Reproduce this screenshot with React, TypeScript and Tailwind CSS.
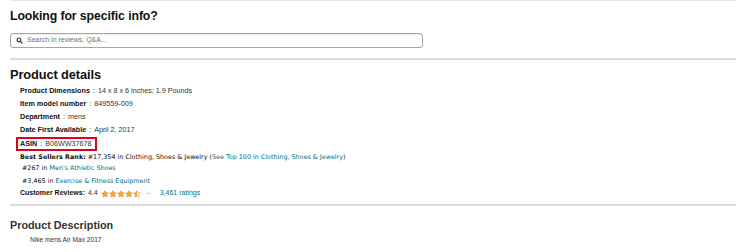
import React from 'react';

const STAR = 'M12 2l2.9 6.6 7.1.6-5.4 4.7 1.6 7-6.2-3.7-6.2 3.7 1.6-7L2 9.2l7.1-.6z';

const Star: React.FC<{ fill: number; id: string }> = ({ fill, id }) => (
  <svg width="8" height="8" viewBox="0 0 24 24" className="shrink-0">
    <defs>
      <linearGradient id={id}>
        <stop offset={`${fill * 100}%`} stopColor="#FFA41C" />
        <stop offset={`${fill * 100}%`} stopColor="#ffffff" />
      </linearGradient>
    </defs>
    <path d={STAR} fill={`url(#${id})`} stroke="#DE7921" strokeWidth="1.6" strokeLinejoin="round" />
  </svg>
);

const details: [string, string][] = [
  ['Product Dimensions', '14 x 8 x 6 inches; 1.9 Pounds'],
  ['Item model number', '849559-009'],
  ['Department', 'mens'],
  ['Date First Available', 'April 2, 2017'],
];

export default function App() {
  return (
    <div className="w-[744px] h-[252px] bg-white overflow-hidden px-[10px] text-[#0F1111]" style={{ fontFamily: '"Liberation Sans", Arial, sans-serif' }}>
      {/* search */}
      <div className="border-t border-[#e7e7e7] pt-[7px] pb-[10px] w-[726px]">
        <h2 className="text-[12.3px] leading-[16px] font-bold tracking-[-0.1px]">Looking for specific info?</h2>
        <div className="mt-[9px] w-[413px] h-[15px] border border-[#a6a6a6] rounded-[3px] flex items-center gap-[4px] pl-[5px] shadow-[inset_0_1px_1px_rgba(0,0,0,0.08)]">
          <svg width="7" height="7" viewBox="0 0 24 24" fill="none" stroke="#333" strokeWidth="4" strokeLinecap="round">
            <circle cx="10" cy="10" r="6.5" />
            <path d="M15 15l6 6" />
          </svg>
          <span className="text-[7px] text-[#6f7373]">Search in reviews, Q&amp;A...</span>
        </div>
      </div>

      {/* details */}
      <div className="border-t-2 border-[#dcdcdc] pt-[6px] pb-[4px] w-[726px]">
        <h2 className="text-[12.8px] leading-[18px] font-bold tracking-[-0.1px]">Product details</h2>
        <div className="pl-[10px] mt-[1px] text-[7.2px]">
          {details.map(([k, v]) => (
            <div key={k} className="h-[13px] flex items-center">
              <span className="font-bold">{k}</span>
              <span className="mx-[3px]">:</span>
              <span className="text-[#333]">{v}</span>
            </div>
          ))}
          <div className="h-[14px] flex items-center -ml-[4px]">
            <div className="border-2 border-[#e3001b] px-[2px] h-[14px] flex items-center w-[81px]">
              <span className="font-bold">ASIN</span>
              <span className="mx-[3px]">:</span>
              <span className="text-[#333]">B06WW37678</span>
            </div>
          </div>
          <div className="text-[6.4px] mt-[1px]" style={{ fontFamily: '"DejaVu Sans", Verdana, sans-serif' }}>
            <div className="leading-[11px]">
              <span className="font-bold">Best Sellers Rank:</span> #17,354 in Clothing, Shoes &amp; Jewelry (
              <span className="text-[#007185]">See Top 100 in Clothing, Shoes &amp; Jewelry</span>)
            </div>
            <div className="pl-[2px] leading-[11px]">
              #267 in <span className="text-[#007185]">Men's Athletic Shoes</span>
            </div>
            <div className="pl-[2px] mt-[2px] leading-[11px]">
              #3,465 in <span className="text-[#007185]">Exercise &amp; Fitness Equipment</span>
            </div>
          </div>
          <div className="h-[13px] flex items-center text-[7px]">
            <span className="font-bold">Customer Reviews:</span>
            <span className="ml-[3px] text-[#333]">4.4</span>
            <div className="flex ml-[3px]">
              <Star fill={1} id="s1" />
              <Star fill={1} id="s2" />
              <Star fill={1} id="s3" />
              <Star fill={1} id="s4" />
              <Star fill={0.5} id="s5" />
            </div>
            <svg width="5" height="5" viewBox="0 0 10 10" className="ml-[5px]" fill="none" stroke="#999" strokeWidth="1.5">
              <path d="M2 3.5l3 3 3-3" />
            </svg>
            <span className="ml-[9px] text-[#007185]">3,461 ratings</span>
          </div>
        </div>
      </div>

      {/* description */}
      <div className="border-t-2 border-[#dcdcdc] pt-[11px] w-[726px]">
        <h2 className="text-[10.8px] leading-[16px] font-bold text-[#333]">Product Description</h2>
        <p className="pl-[20px] mt-[2px] text-[6.6px] text-[#333]">Nike mens Air Max 2017</p>
      </div>
    </div>
  );
}
